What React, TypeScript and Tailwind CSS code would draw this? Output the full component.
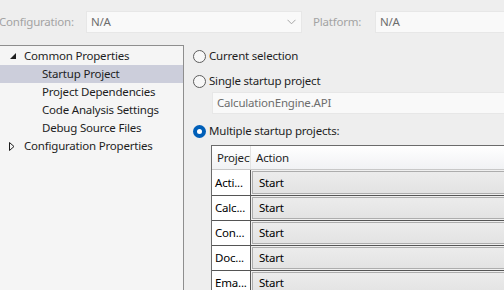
import React from "react";

const Radio = ({ checked }: { checked?: boolean }) =>
  checked ? (
    <span className="flex h-[13px] w-[13px] shrink-0 items-center justify-center rounded-full bg-[#005fb8]">
      <span className="h-[5px] w-[5px] rounded-full bg-white" />
    </span>
  ) : (
    <span className="h-[13px] w-[13px] shrink-0 rounded-full border border-[#5d5d5d] bg-[#f7f7f7]" />
  );

const rows = ["Acti...", "Calc...", "Con...", "Doc...", "Ema..."];

export default function App() {
  return (
    <div className="relative h-[290px] w-[504px] overflow-hidden bg-[#eeeeee] font-['Noto_Sans',sans-serif] text-[11.5px] tracking-[-0.2px] text-[#1e1e1e]">
      {/* top bar */}
      <div className="flex h-[45px] items-center whitespace-nowrap pb-[1px]">
        <div className="ml-[-1px] w-[87px] shrink-0 text-[#a3a3a3]">Configuration:</div>
        <div className="flex h-[22px] w-[216px] shrink-0 items-center justify-between border border-[#e7e7e7] bg-[#f9f9f9] pl-[4px] pr-[5px] text-[#6d6d6d]">
          <span>N/A</span>
          <svg width="9" height="6" viewBox="0 0 9 6" fill="none">
            <path d="M0.5 0.8 L4.5 4.8 L8.5 0.8" stroke="#a6a6a6" strokeWidth="1" />
          </svg>
        </div>
        <div className="ml-[11px] w-[62px] shrink-0 text-[#a3a3a3]">Platform:</div>
        <div className="flex h-[22px] w-[200px] shrink-0 items-center border border-[#e7e7e7] bg-[#f9f9f9] pl-[4px] text-[#6d6d6d]">
          N/A
        </div>
      </div>

      <div className="flex h-[245px]">
        {/* tree */}
        <div className="w-[184px] shrink-0 border-r border-t border-[#8e8e8e] bg-[#f5f5f5] pt-[1px]">
          <div className="flex h-[18px] items-center">
            <svg className="ml-[10px] mr-[8px]" width="6" height="6" viewBox="0 0 6 6">
              <path d="M6 0 L6 6 L0 6 Z" fill="#1e1e1e" />
            </svg>
            <span>Common Properties</span>
          </div>
          <div className="flex h-[18px] items-center bg-[#cccedb] pl-[42px]">Startup Project</div>
          <div className="flex h-[18px] items-center pl-[42px]">Project Dependencies</div>
          <div className="flex h-[18px] items-center pl-[42px]">Code Analysis Settings</div>
          <div className="flex h-[18px] items-center pl-[42px]">Debug Source Files</div>
          <div className="flex h-[18px] items-center">
            <svg className="ml-[9px] mr-[9px]" width="6" height="9" viewBox="0 0 6 9">
              <path d="M0.5 0.5 L5 4.5 L0.5 8.5 Z" fill="none" stroke="#1e1e1e" strokeWidth="1" />
            </svg>
            <span>Configuration Properties</span>
          </div>
        </div>

        {/* right content */}
        <div className="flex min-w-0 flex-1 flex-col pl-[9px] pt-[3px]">
          <div className="flex h-[16px] items-center gap-[3px]">
            <Radio />
            <span>Current selection</span>
          </div>
          <div className="mt-[9px] flex h-[16px] items-center gap-[3px]">
            <Radio />
            <span>Single startup project</span>
          </div>
          <div className="ml-[19px] mt-[3px] flex h-[22px] w-[320px] shrink-0 items-center border border-[#e7e7e7] bg-[#f9f9f9] pl-[4px] text-[#6d6d6d]">
            CalculationEngine.API
          </div>
          <div className="mt-[9px] flex h-[16px] items-center gap-[3px]">
            <Radio checked />
            <span>Multiple startup projects:</span>
          </div>
          {/* grid */}
          <div className="ml-[18px] mt-[6px] w-[320px] shrink-0 border-l border-t border-[#6b6b6b] bg-white">
            <div className="flex h-[24px] border-b border-[#c8c8c8] bg-gradient-to-b from-white to-[#f1f2f4]">
              <div className="flex w-[39px] items-center overflow-hidden whitespace-nowrap border-r border-[#e3e3e3] pl-[5px]">
                Project
              </div>
              <div className="flex items-center pl-[5px]">Action</div>
            </div>
            {rows.map((r, i) => (
              <div key={r} className={`flex h-[25px] ${i === 0 ? "" : "border-t border-[#555555]"}`}>
                <div className="flex w-[39px] items-center overflow-hidden whitespace-nowrap border-r border-[#555555] bg-white pl-[3px] text-black">
                  {r}
                </div>
                <div className="flex flex-1 bg-[#f0f0f0] py-[1px] pl-[1px]">
                  <div className="flex flex-1 items-center border border-[#adadad] bg-gradient-to-b from-[#ececec] to-[#e3e3e3] pl-[6px] text-black">
                    Start
                  </div>
                </div>
              </div>
            ))}
          </div>
        </div>
      </div>
    </div>
  );
}
